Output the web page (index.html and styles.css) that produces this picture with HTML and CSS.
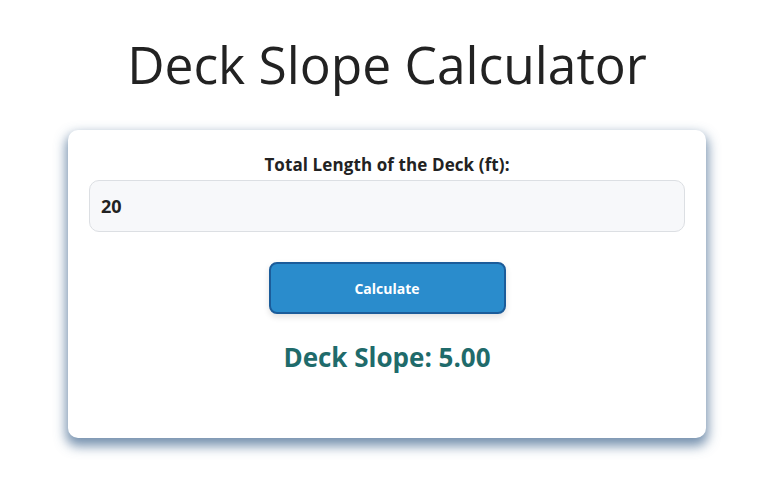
FILE: index.html
```html
<!DOCTYPE html>
<html lang="en">
<head>
<meta charset="utf-8">
<title>Deck Slope Calculator</title>
<link rel="stylesheet" href="styles.css">
</head>
<body>
<h1 class="title">Deck Slope Calculator</h1>
<div class="card">
  <label class="label" for="len">Total Length of the Deck (ft):</label>
  <input class="input" id="len" type="text" value="20">
  <button class="btn" type="button">Calculate</button>
  <div class="result">Deck Slope: 5.00</div>
</div>
</body>
</html>
```
FILE: styles.css
```css
html, body {
  margin: 0;
  padding: 0;
  background: #ffffff;
}
body {
  font-family: "Open Sans", "Noto Sans", sans-serif;
  color: #222;
  display: flex;
  flex-direction: column;
  align-items: center;
  padding-bottom: 40px;
}
.title {
  font-weight: 400;
  font-size: 51.5px;
  line-height: 60px;
  margin: 34px 0 0 6px;
  color: #222;
}
.card {
  box-sizing: border-box;
  width: 638px;
  height: 308px;
  margin-top: 36px;
  margin-left: 6px;
  background: #fff;
  border-radius: 10px;
  box-shadow: 0 6px 12px 2px rgba(60, 98, 140, 0.7);
  padding: 23px 21px 0 21px;
  display: flex;
  flex-direction: column;
  align-items: center;
}
.label {
  font-size: 17px;
  font-weight: 700;
  color: #222;
  line-height: 23px;
  letter-spacing: 0.1px;
}
.input {
  box-sizing: border-box;
  width: 100%;
  height: 52px;
  margin-top: 4px;
  border: 1px solid #dcdfe3;
  border-radius: 10px;
  background: #f7f8fa;
  font-family: inherit;
  font-size: 18px;
  font-weight: 700;
  color: #222;
  padding: 0 11px;
}
.btn {
  box-sizing: border-box;
  width: 237px;
  height: 52px;
  margin-top: 30px;
  background: #2a8ccc;
  border: 2px solid #1b5c9a;
  border-radius: 8px;
  color: #fff;
  font-family: inherit;
  font-size: 14px;
  font-weight: 700;
  box-shadow: 0 3px 6px rgba(0, 0, 0, 0.12);
}
.result {
  margin-top: 25px;
  font-size: 26px;
  font-weight: 700;
  color: #1f6b6b;
  line-height: 36px;
}
```
